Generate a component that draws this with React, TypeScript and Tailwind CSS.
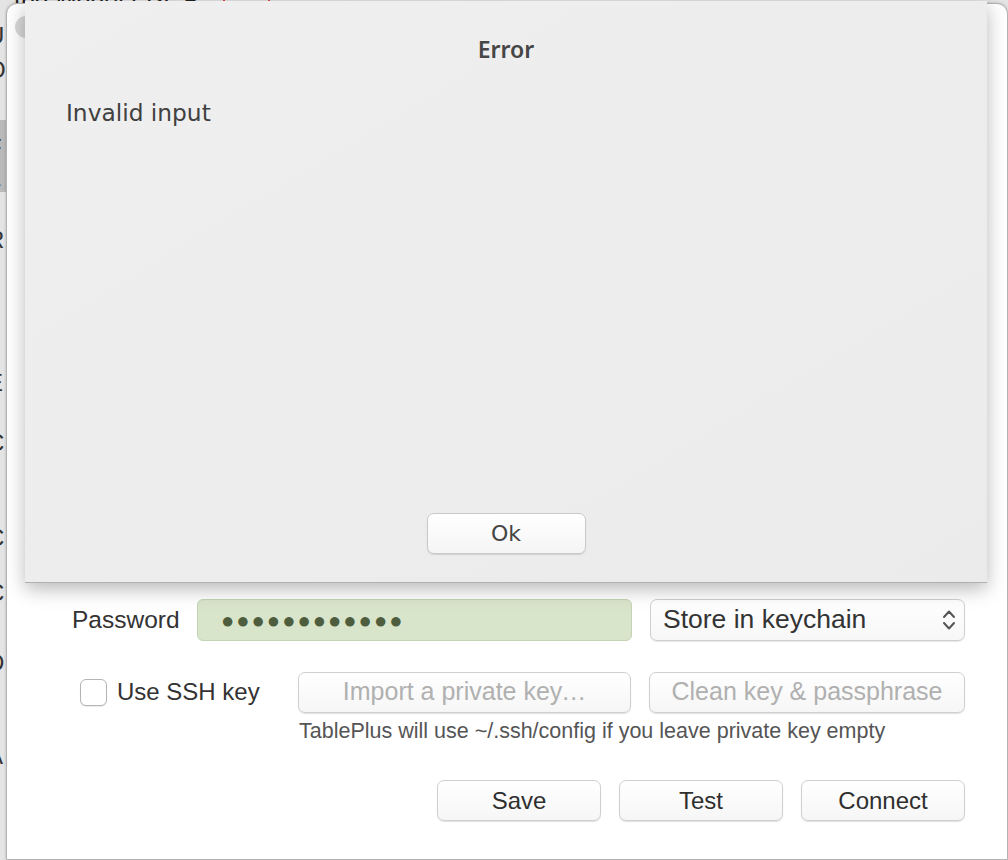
import { useState } from "react";

function Chevrons() {
  return (
    <svg width="14" height="24" viewBox="0 0 14 24" fill="none">
      <path d="M2 9 L7 3.5 L12 9" stroke="#555" strokeWidth="2" strokeLinecap="round" strokeLinejoin="round" />
      <path d="M2 15 L7 20.5 L12 15" stroke="#555" strokeWidth="2" strokeLinecap="round" strokeLinejoin="round" />
    </svg>
  );
}

function MacButton({
  children,
  className = "",
  disabled = false,
}: {
  children: React.ReactNode;
  className?: string;
  disabled?: boolean;
}) {
  return (
    <button
      className={
        "h-[41px] rounded-[7px] border border-[#cfcfcf] bg-gradient-to-b from-white to-[#f6f6f6] shadow-[0_1px_1px_rgba(0,0,0,0.12)] " +
        (disabled ? "text-[#b0b0b0] text-[25px] " : "text-[#2f2f2f] text-[24px] ") +
        className
      }
    >
      {children}
    </button>
  );
}

function App() {
  const [useKey, setUseKey] = useState(false);
  const sideLetters = [
    { t: "U", y: "top-[18px]" },
    { t: "O", y: "top-[52px]" },
    { t: "c", y: "top-[90px]" },
    { t: "F", y: "top-[130px]" },
    { t: "a", y: "top-[160px]" },
    { t: "R", y: "top-[222px]" },
    { t: "I", y: "top-[275px]" },
    { t: "E", y: "top-[365px]" },
    { t: "C", y: "top-[425px]" },
    { t: "C", y: "top-[520px]" },
    { t: "C", y: "top-[575px]" },
    { t: "D", y: "top-[645px]" },
    { t: "A", y: "top-[738px]" },
    { t: "I", y: "top-[795px]" },
  ];

  return (
    <div
      className="relative w-[1008px] h-[860px] overflow-hidden bg-[#e4e4e4]"
      style={{ fontFamily: '"Liberation Sans", Arial, sans-serif' }}
    >
      {/* window behind */}
      <div className="absolute left-[14px] -top-[17px] text-[25px] text-[#222] whitespace-nowrap">tbd Model FRGB</div>
      <div className="absolute left-[223px] top-0 h-[4px] w-[2px] bg-[#e04848]" />
      <div className="absolute left-[268px] top-0 h-[4px] w-[2px] bg-[#e04848]" />
      <div className="absolute left-0 top-[120px] h-[72px] w-[7px] bg-[#b9b9b9]" />
      {sideLetters.map((l, i) => (
        <div key={i} className={"absolute -left-[13px] text-[24px] text-[#333] " + l.y}>
          {l.t}
        </div>
      ))}

      {/* main window */}
      <div className="absolute left-[6px] top-[3px] right-0 bottom-0 rounded-t-[11px] border border-[#b3b3b3] bg-white shadow-[0_0_3px_rgba(0,0,0,0.2)]">
        <div className="absolute left-[8px] top-[12px] h-[22px] w-[22px] rounded-full bg-[#d9d9d9]" />

        <div className="flex flex-col pl-[65px] pt-[595px] w-[958px]">
          <div className="flex items-center h-[42px]">
            <div className="w-[125px] text-[24.5px] text-[#333]">Password</div>
            <div className="w-[435px] h-[42px] rounded-[6px] border border-[#c4d3b4] bg-[#d9e5cb] flex items-center pl-[23px] text-[#4f5d3f] text-[22px] tracking-[2px]">
              ●●●●●●●●●●●●
            </div>
            <div className="ml-[18px] w-[315px] h-[42px] rounded-[7px] border border-[#cfcfcf] bg-gradient-to-b from-white to-[#f7f7f7] shadow-[0_1px_1px_rgba(0,0,0,0.1)] flex items-center justify-between pl-[12px] pr-[8px]">
              <span className="text-[26.5px] text-[#333]">Store in keychain</span>
              <Chevrons />
            </div>
          </div>

          <div className="flex items-center h-[42px] mt-[30px]">
            <div className="w-[226px] flex items-center pl-[8px]">
              <button
                onClick={() => setUseKey(!useKey)}
                className="w-[27px] h-[27px] rounded-[6px] border border-[#b4b4b4] bg-white shadow-[0_1px_1px_rgba(0,0,0,0.08)]"
              />
              <span className="ml-[10px] text-[24px] text-[#333]">Use SSH key</span>
            </div>
            <MacButton disabled className="w-[333px]">
              Import a private key<span className="tracking-[1px]">...</span>
            </MacButton>
            <MacButton disabled className="ml-[18px] w-[316px]">
              Clean key &amp; passphrase
            </MacButton>
          </div>

          <div className="pl-[227px] mt-[6px] text-[21.5px] text-[#555] leading-[24px] whitespace-nowrap">
            TablePlus will use ~/.ssh/config if you leave private key empty
          </div>

          <div className="flex justify-end gap-[18px] mt-[37px]">
            <MacButton className="w-[164px]">Save</MacButton>
            <MacButton className="w-[164px]">Test</MacButton>
            <MacButton className="w-[164px]">Connect</MacButton>
          </div>
        </div>

        {/* error sheet */}
        <div
          className="absolute left-[18px] -top-[3px] w-[962px] h-[582px] flex flex-col items-center bg-gradient-to-br from-[#efefef] to-[#ebebeb] border-b border-[#b0b0b0] shadow-[0_6px_18px_rgba(0,0,0,0.28)]"
          style={{ fontFamily: '"DejaVu Sans", "Open Sans", sans-serif' }}
        >
          <div
            className="mt-[33px] text-[23px] font-semibold text-[#464646] leading-[30px]"
            style={{ fontFamily: '"Noto Sans", "DejaVu Sans", sans-serif' }}
          >
            Error
          </div>
          <div className="self-start ml-[41px] mt-[34px] text-[23.3px] text-[#404040] leading-[30px]">Invalid input</div>
          <div className="flex-1" />
          <button className="mb-[28px] w-[159px] h-[41px] rounded-[7px] border border-[#c9c9c9] bg-gradient-to-b from-white to-[#f5f5f5] shadow-[0_1px_1px_rgba(0,0,0,0.12)] text-[22px] text-[#444]">
            Ok
          </button>
        </div>
      </div>
    </div>
  );
}

export default App;
